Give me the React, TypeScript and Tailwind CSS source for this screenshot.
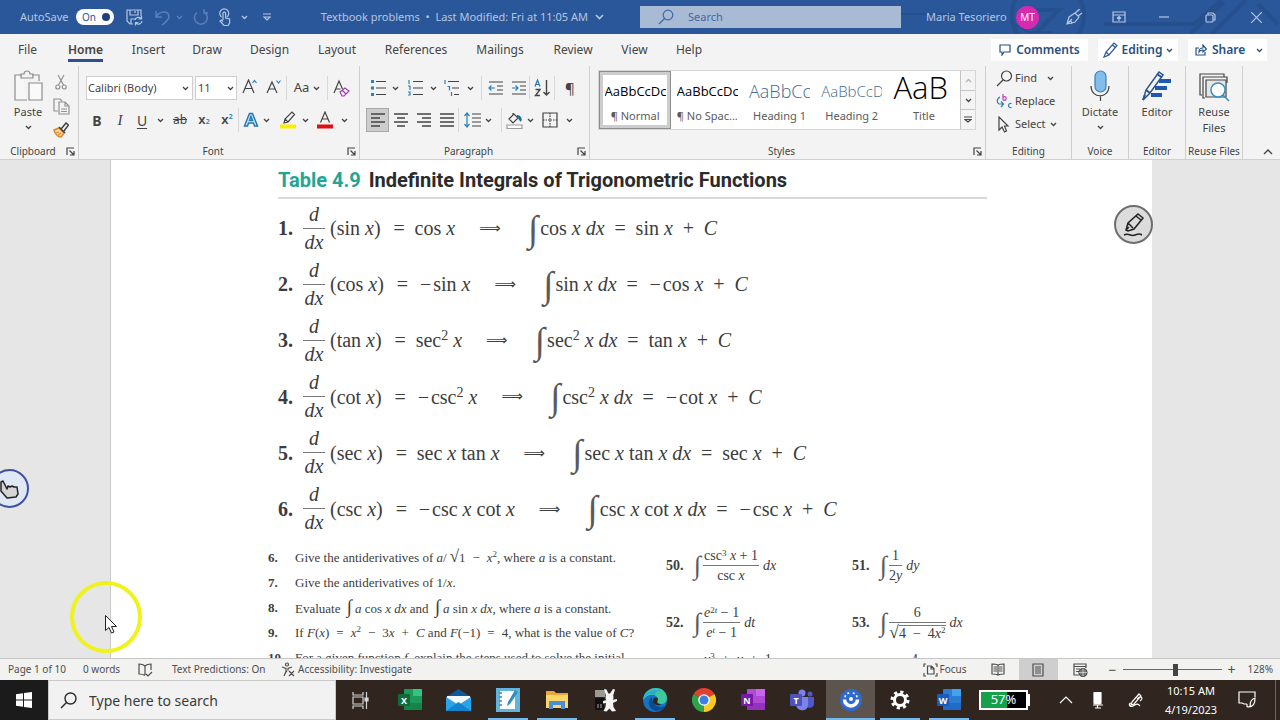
import type { ReactNode } from 'react';
import clsx from 'clsx';

interface BoxProps {
  children?: ReactNode;
  className?: string;
}

const tabs = [
  { name: 'File', width: 'w-[49px]' },
  { name: 'Home', width: 'w-[67px]' },
  { name: 'Insert', width: 'w-[59px]' },
  { name: 'Draw', width: 'w-[58px]' },
  { name: 'Design', width: 'w-[67px]' },
  { name: 'Layout', width: 'w-[68px]' },
  { name: 'References', width: 'w-[90px]' },
  { name: 'Mailings', width: 'w-[78px]' },
  { name: 'Review', width: 'w-[68px]' },
  { name: 'View', width: 'w-[55px]' },
  { name: 'Help', width: 'w-[54px]' },
];

const styleCards = [
  { sample: 'AaBbCcDc', label: '¶ Normal', look: 'text-[13px] leading-10 text-black' },
  { sample: 'AaBbCcDc', label: '¶ No Spac...', look: 'text-[13px] leading-10 text-black' },
  { sample: 'AaBbCc', label: 'Heading 1', look: 'text-[18px] leading-10 font-light text-[#44698f]' },
  { sample: 'AaBbCcD', label: 'Heading 2', look: 'text-[15px] leading-10 font-light text-[#44698f]' },
  { sample: 'AaB', label: 'Title', look: 'text-[31px] leading-8 font-light text-black' },
];

/* ---------- small building blocks ---------- */

function Svg({ w, h, children, className }: { w: number; h: number; children: ReactNode; className?: string }) {
  return (
    <svg
      width={w}
      height={h}
      viewBox={`0 0 ${w} ${h}`}
      fill="none"
      stroke="currentColor"
      strokeWidth="1.2"
      className={clsx('shrink-0', className)}
      aria-hidden="true"
    >
      {children}
    </svg>
  );
}

function Chevron({ className }: { className?: string }) {
  return (
    <Svg w={7} h={5} className={className}>
      <path d="M1 1l2.5 2.5L6 1" strokeWidth="1.3" />
    </Svg>
  );
}

function Tool({ label, className, children }: BoxProps & { label: string }) {
  return (
    <button aria-label={label} className={clsx('flex h-6 shrink-0 items-center justify-center', className)}>
      {children}
    </button>
  );
}

function Drop({ label, className }: { label: string; className: string }) {
  return (
    <Tool label={label} className={className}>
      <Chevron />
    </Tool>
  );
}

function Rule() {
  return <div className="h-6 w-px shrink-0 bg-[#d8d8d8]" />;
}

function Group({ label, launcher, className, children }: BoxProps & { label: string; launcher?: boolean }) {
  return (
    <section className={clsx('flex shrink-0 flex-col border-r border-[#cfcfcf]', className)}>
      <div className="h-[78px]">{children}</div>
      <div className="flex h-4 items-center">
        <span className="flex-1 text-center text-[10px] whitespace-nowrap">{label}</span>
        {launcher && (
          <button aria-label={`${label} settings`} className="mr-[3px]">
            <Svg w={9} h={9}>
              <path d="M1 8V1h7M3.5 3.5l4 4M8 4v4H4" />
            </Svg>
          </button>
        )}
      </div>
    </section>
  );
}

/* ---------- title bar ---------- */

function TitleBar() {
  return (
    <header className="relative flex h-[34px] shrink-0 items-center bg-[#2a579a] text-[12px] text-[#b5c6e0]">
      <svg
        className="pointer-events-none absolute top-0 right-0"
        width="420"
        height="34"
        viewBox="0 0 420 34"
        fill="none"
        stroke="#264f8e"
        strokeWidth="4"
        aria-hidden="true"
      >
        <path d="M40 14h70M150 22l18 10h24" strokeWidth="2" />
        <circle cx="188" cy="15" r="36" />
        <path d="M165 10h34l-22 22M244 24h90l28-24M330 34l34-32M352 34l34-34M398 4l20 20" />
      </svg>
      <label className="ml-5 flex items-center">
        <span className="w-14 text-[11px]">AutoSave</span>
        <input type="checkbox" defaultChecked className="peer sr-only" />
        <span className="flex h-4 w-[38px] items-center justify-between rounded-full bg-white pr-1 pl-[6px] text-[10px] text-[#2a579a]">
          On
          <i className="h-2 w-2 rounded-full bg-[#1f4079]" />
        </span>
      </label>
      <button aria-label="Save" className="ml-3">
        <Svg w={17} h={17}>
          <path d="M7 15H4l-3-3V1h14v6M4 1v5h8V1M5 15v-5h4M9 2v2" />
          <path d="M9 11a3.5 3.5 0 0 1 6-1.5M15.500 7v3h-3M16 12a3.500 3.500 0 0 1-6 2M9.500 16.500v-3h3" />
        </Svg>
      </button>
      <button aria-label="Undo" className="ml-3 flex items-center gap-[5px] text-[#5b80b8]">
        <Svg w={16} h={17}>
          <path d="M1 2v6h6M1.500 7.500C4 2 13 1 14 7c.5 3-3 6-7 9" strokeWidth="1.5" />
        </Svg>
        <Chevron />
      </button>
      <button aria-label="Repeat" className="ml-[10px] text-[#5b80b8]">
        <Svg w={16} h={17}>
          <path d="M11 3A6.500 6.500 0 1 1 4 3.500M11 0v4h4" strokeWidth="1.5" />
        </Svg>
      </button>
      <button aria-label="Touch mode" className="ml-[9px] flex items-center gap-[9px]">
        <Svg w={14} h={18}>
          <path d="M3.500 9a4.500 4.500 0 1 1 5.500 0M5 12V5.500a1.300 1.300 0 0 1 2.600 0V10l4 1v4l-1.500 2.500H6L2 13l1.500-1 1.500 1.500" />
        </Svg>
        <Chevron />
      </button>
      <button aria-label="Customize Quick Access Toolbar" className="ml-[14px]">
        <Svg w={10} h={8}>
          <path d="M1 1h8M2 4l3 3 3-3z" />
        </Svg>
      </button>
      <div className="min-w-0 flex-1" />
      <button className="flex items-center text-[11px] whitespace-nowrap">
        Textbook problems&nbsp; •&nbsp; Last Modified: Fri at 11:05 AM
        <Svg w={9} h={6} className="ml-[7px]">
          <path d="M1 1l3.500 3.500L8 1" strokeWidth="1.6" />
        </Svg>
      </button>
      <label className="relative ml-9 flex h-[22px] w-[261px] items-center bg-[#a9bad5] pl-[18px] text-[#3f68a8]">
        <Svg w={16} h={16}>
          <circle cx="10" cy="6" r="4.800" />
          <path d="M6.500 9.500L1 15" />
        </Svg>
        <input
          placeholder="Search"
          aria-label="Search"
          className="ml-[14px] w-40 bg-transparent text-[11px] outline-none placeholder:text-[#3f68a8]"
        />
      </label>
      <button className="relative ml-[25px] flex items-center text-[11px] whitespace-nowrap">
        <span className="w-[90px] text-left">Maria Tesoriero</span>
        <span className="flex h-[23px] w-[23px] items-center justify-center rounded-full bg-[#d829b0] text-[10px] text-white">MT</span>
      </button>
      <div className="relative ml-[13px] flex w-[228px] items-center justify-around">
        <button aria-label="Ink" className="w-[44px]">
          <Svg w={18} h={17} className="mx-auto">
            <path d="M2 15l2-7 6-4 4 4-4 5zM2 15l5-5M10 4l4-3M13 7l4-3M12 2l3-2M6 12l1 3" />
          </Svg>
        </button>
        <button aria-label="Ribbon display options" className="w-[44px]">
          <Svg w={14} h={12} className="mx-auto">
            <path d="M1 1h12v10H1zM1 4h12M7 10V6M5 7.500l2-2 2 2" />
          </Svg>
        </button>
        <button aria-label="Minimize" className="w-[46px]">
          <Svg w={10} h={2} className="mx-auto">
            <path d="M0 1h10" />
          </Svg>
        </button>
        <button aria-label="Restore" className="w-[46px]">
          <Svg w={11} h={11} className="mx-auto">
            <rect x="1" y="3" width="7" height="7" rx="1" />
            <path d="M3 3V1h5l2 2v5H8" />
          </Svg>
        </button>
        <button aria-label="Close" className="w-[46px]">
          <Svg w={11} h={11} className="mx-auto">
            <path d="M0 0l11 11M11 0L0 11" />
          </Svg>
        </button>
      </div>
    </header>
  );
}

function TabRow() {
  return (
    <nav className="flex h-8 items-center pl-[3px] text-[12px]">
      {tabs.map(tab => (
        <button key={tab.name} className={clsx('flex h-8 justify-center', tab.width)}>
          <span
            className={clsx(
              'mt-1 h-6 border-b-3 leading-6',
              tab.name === 'Home' ? 'border-[#2b4f92] font-semibold' : 'border-transparent'
            )}
          >
            {tab.name}
          </span>
        </button>
      ))}
      <div className="flex-1" />
      <div className="mr-[13px] flex h-[22px] gap-[10px] text-[12px] font-semibold text-[#25507f]">
        <button className="flex w-[97px] items-center justify-center gap-[5px] bg-white">
          <Svg w={12} h={12}>
            <path d="M1 1h10v7H5l-2 3V8H1z" />
          </Svg>
          Comments
        </button>
        <button className="flex w-[80px] items-center justify-center gap-[3px] bg-white">
          <Svg w={15} h={16} className="text-[#2a579a]">
            <path d="M1 15l2-5L11 1l3 2.500L6 13zM9.500 3l3 2.500M3 10l3 3" />
          </Svg>
          Editing
          <Chevron />
        </button>
        <button className="flex w-[79px] items-center bg-white pl-[7px]">
          <Svg w={12} h={12}>
            <path d="M4 4H1v7h9V8M4 8c0-3 1-4 4-4V1l3.500 4L8 8V6C6 6 5 6.500 4 8z" />
          </Svg>
          <span className="ml-[5px] flex-1 text-left">Share</span>
          <Chevron className="mr-1" />
        </button>
      </div>
    </nav>
  );
}

/* ---------- ribbon groups ---------- */

function ClipboardGroup() {
  return (
    <Group label="Clipboard" launcher className="w-[79px]">
      <div className="flex pt-[4px]">
        <button className="ml-[10px] flex w-9 flex-col items-center text-[11px]">
          <Svg w={29} h={32} className="text-[#8d8d8d]">
            <path d="M13 30H1V5h7M18 5h7v6" fill="#f7f7f7" />
            <path d="M7 8V4h3c0-4 6-4 6 0h3v4z" />
            <path d="M15 13h13v17H15z" fill="#fafafa" />
          </Svg>
          <span className="leading-5">Paste</span>
          <Chevron className="mt-[3px]" />
        </button>
        <div className="ml-[5px] flex w-5 flex-col">
          <Tool label="Cut">
            <Svg w={12} h={16} className="text-[#929292]">
              <path d="M3 1l5.500 10M9 1L3.500 11" />
              <circle cx="2.800" cy="13" r="2" />
              <circle cx="9.200" cy="13" r="2" />
            </Svg>
          </Tool>
          <Tool label="Copy">
            <Svg w={17} h={17} className="text-[#929292]">
              <path d="M5 13H1V1h6l2 2M6 4h6l4 4v8H6zM12 4v4h4M8 11h6M8 13.500h6" />
            </Svg>
          </Tool>
          <Tool label="Format Painter">
            <Svg w={16} h={16}>
              <path d="M1 8l5-2 5 5-3 4c-3 0-6-3-7-7z" fill="#fbd9b0" stroke="#e0851f" strokeWidth="1.500" />
              <path d="M3 11l3-1M5 13l3-2" stroke="#e0851f" />
              <path d="M6 5l6 6M8.500 6.500L13 1l2.500 2-4.500 6" stroke="#444" strokeWidth="1.500" />
            </Svg>
          </Tool>
        </div>
      </div>
    </Group>
  );
}

function FontGroup() {
  return (
    <Group label="Font" launcher className="w-[281px]">
      <div className="flex h-11 items-center pl-[7px]">
        <label className="relative mr-[2px] flex h-6 w-[107px] items-center border border-[#cfcfcf] bg-white pl-px">
          <select aria-label="Font name" className="w-full appearance-none text-[11px] outline-none">
            <option>Calibri (Body)</option>
          </select>
          <Chevron className="absolute right-[3px]" />
        </label>
        <label className="relative flex h-6 w-[42px] items-center border border-[#cfcfcf] bg-white pl-[2px]">
          <select aria-label="Font size" className="w-full appearance-none text-[11px] outline-none">
            <option>11</option>
          </select>
          <Chevron className="absolute right-[2px]" />
        </label>
        <Tool label="Grow font" className="w-[25px]">
          <Svg w={16} h={18}>
            <path d="M1 14L6.500 1 12 14M3 9.500h7" />
            <path d="M10.500 4l2-2.500 2 2.500" stroke="#2a7fc0" />
          </Svg>
        </Tool>
        <Tool label="Shrink font" className="w-[24px]">
          <Svg w={16} h={18}>
            <path d="M1 14L6 3l5 11M3 10h6.500" />
            <path d="M10.500 1.500l2 2.500 2-2.500" stroke="#2a7fc0" />
          </Svg>
        </Tool>
        <Rule />
        <Tool label="Change case" className="w-[40px] gap-1 text-[13px]">
          Aa
          <Chevron />
        </Tool>
        <Rule />
        <Tool label="Clear formatting" className="w-[27px]">
          <Svg w={17} h={18}>
            <path d="M1 14L6 2l3.500 8M3 10h4.500" />
            <path d="M7 13l5-4 4 3-5 5H9zM9 11l4 4" stroke="#a33bb5" />
          </Svg>
        </Tool>
      </div>
      <div className="flex h-5 items-center pl-[7px] text-[14px]">
        <Tool label="Bold" className="w-[22px] font-bold">B</Tool>
        <Tool label="Italic" className="w-6 font-['Liberation_Serif'] text-[15px] italic">I</Tool>
        <Tool label="Underline" className="w-5 underline underline-offset-2">U</Tool>
        <Drop label="Underline styles" className="w-4" />
        <Tool label="Strikethrough" className="w-6 text-[12px] line-through">ab</Tool>
        <Tool label="Subscript" className="w-6 text-[13px] font-semibold">
          x<sub className="text-[7px] text-[#2a7fc0]">2</sub>
        </Tool>
        <Tool label="Superscript" className="w-[22px] text-[13px] font-semibold">
          x<sup className="text-[7px] text-[#2a7fc0]">2</sup>
        </Tool>
        <Rule />
        <Tool label="Text effects" className="w-6">
          <Svg w={16} h={16}>
            <path
              d="M1.500 14L6.500 1.500h3l5 12.500h-3l-1-3h-5l-1 3zM6.500 8.500h3L8 4.500z"
              stroke="#2378b5"
              strokeWidth="1.500"
              fill="#d6eaf8"
            />
          </Svg>
        </Tool>
        <Drop label="Effect options" className="w-[7px]" />
        <Tool label="Highlight" className="ml-[5px] w-[26px]">
          <Svg w={16} h={18}>
            <path d="M0 15.500h16" stroke="#f7f000" strokeWidth="4" />
            <path d="M4 12l1-4 7-7 2.500 2.500L8 11zM5 8l3 3" />
          </Svg>
        </Tool>
        <Drop label="Highlight colours" className="w-[8px]" />
        <Tool label="Font colour" className="w-8">
          <Svg w={16} h={18}>
            <path d="M0 15.500h16" stroke="#e01010" strokeWidth="4" />
            <path d="M3.500 11.500L8 1l4.500 10.500M5 8h6" />
          </Svg>
        </Tool>
        <Drop label="Font colours" className="w-[7px]" />
      </div>
    </Group>
  );
}

function Lines({ d, w = 16 }: { d: string; w?: number }) {
  return (
    <Svg w={w} h={16}>
      <path d={d} strokeWidth="1.300" />
    </Svg>
  );
}

function ParagraphGroup() {
  return (
    <Group label="Paragraph" launcher className="w-[230px]">
      <div className="flex h-11 items-center pl-[6px]">
        <Tool label="Bullets" className="w-6">
          <Svg w={17} h={16}>
            <path d="M1 1.500h3M1 8h3M1 14.500h3" stroke="#2a7fc0" strokeWidth="3" />
            <path d="M6 1.500h10M6 8h10M6 14.500h10" />
          </Svg>
        </Tool>
        <Drop label="Bullet library" className="w-[11px]" />
        <Tool label="Numbering" className="w-7">
          <Svg w={17} h={16}>
            <path d="M2 0v4M1 6h2v4M1 12h2v3H1" stroke="#2a7fc0" />
            <path d="M6 1.500h10M6 8h10M6 14.500h10" />
          </Svg>
        </Tool>
        <Drop label="Numbering library" className="w-[8px]" />
        <Tool label="Multilevel list" className="w-[30px]">
          <Svg w={16} h={16}>
            <path d="M1 0v4M3.500 6.500h2v4M7.500 12v4" stroke="#2a7fc0" />
            <path d="M4 1.500h11M8 8h7M10 14.500h5" />
          </Svg>
        </Tool>
        <Drop label="List library" className="mr-2 w-[6px]" />
        <Rule />
        <Tool label="Decrease indent" className="w-[27px]">
          <Svg w={16} h={14}>
            <path d="M1 1h14M9 5h6M9 9h6M1 13h14" />
            <path d="M7 7H1M3.500 4.500L1 7l2.500 2.500" stroke="#2a7fc0" />
          </Svg>
        </Tool>
        <Tool label="Increase indent" className="w-[20px]">
          <Svg w={16} h={14}>
            <path d="M1 1h14M9 5h6M9 9h6M1 13h14" />
            <path d="M1 7h6M4.500 4.500L7 7 4.500 9.500" stroke="#2a7fc0" />
          </Svg>
        </Tool>
        <Rule />
        <Tool label="Sort" className="w-6">
          <Svg w={17} h={18}>
            <path d="M1 7.500L3.500 1 6 7.500M2 5.500h3" stroke="#2378b5" />
            <path d="M1.500 10.500H6L1.500 16.500H6M12.500 1v15M9.500 13l3 3 3-3" strokeWidth="1.400" />
          </Svg>
        </Tool>
        <Rule />
        <Tool label="Show marks" className="w-[30px] text-[15px]">¶</Tool>
      </div>
      <div className="flex h-5 items-center pl-[6px]">
        <Tool label="Align left" className="w-[23px] border border-[#a8a8a8] bg-[#cdcdcd]">
          <Lines d="M1 2h14M1 6h9M1 10h14M1 14h9" />
        </Tool>
        <Tool label="Center" className="w-[23px]">
          <Lines d="M1 2h14M4 6h8M1 10h14M4 14h8" />
        </Tool>
        <Tool label="Align right" className="w-[23px]">
          <Lines d="M1 2h14M6 6h9M1 10h14M6 14h9" />
        </Tool>
        <Tool label="Justify" className="w-[23px]">
          <Lines d="M1 2h14M1 6h14M1 10h14M1 14h14" />
        </Tool>
        <Rule />
        <Tool label="Line spacing" className="w-[26px]">
          <Svg w={17} h={16}>
            <path d="M3 1v14M.5 4L3 1l2.500 3M.5 12L3 15l2.500-3" stroke="#2a7fc0" />
            <path d="M8 2h9M8 6h9M8 10h9M8 14h9" />
          </Svg>
        </Tool>
        <Drop label="Spacing options" className="mr-[9px] w-[7px]" />
        <Rule />
        <Tool label="Shading" className="w-6">
          <Svg w={17} h={17}>
            <path d="M3 7l5-5 4 4-5 5zM7 4V1" />
            <path d="M12 5l3 4M14 9c2-2 0-5-3-5" stroke="#1f6e96" strokeWidth="1.800" />
            <path d="M1 13h15v3.500H1z" stroke="#9b9b9b" fill="#fff" />
          </Svg>
        </Tool>
        <Drop label="Shading colours" className="w-[8px]" />
        <Tool label="Borders" className="w-8">
          <Svg w={16} h={16}>
            <path d="M1 1h14v14H1z" />
            <path d="M8 1v14M1 8h14" strokeDasharray="1.500 1" />
          </Svg>
        </Tool>
        <Drop label="Border options" className="w-[7px]" />
      </div>
    </Group>
  );
}

function StylesGroup() {
  return (
    <Group label="Styles" launcher className="min-w-0 flex-1">
      <div className="pt-1 pr-[9px] pl-2">
        <div className="flex h-[60px] border border-[#d6d6d6] bg-white">
          {styleCards.map((card, i) => (
            <button
              key={card.label}
              className={clsx(
                'flex min-w-0 flex-1 flex-col items-center overflow-hidden',
                i === 0 && 'outline outline-1 -outline-offset-1 outline-[#8c8c8c] ring-4 ring-[#cdcdcd] ring-inset'
              )}
            >
              <span
                className={clsx(
                  "block h-[34px] w-[61px] overflow-hidden text-left font-['Open_Sans'] whitespace-nowrap",
                  card.look
                )}
              >
                {card.sample}
              </span>
              <span className="text-[11px] leading-[22px] whitespace-nowrap text-[#5a5a5a]">{card.label}</span>
            </button>
          ))}
          <div className="flex w-[15px] flex-col divide-y divide-[#c4c4c4] border-l border-[#c4c4c4] bg-[#f4f4f4]">
            <button aria-label="Previous styles" className="flex flex-1 items-center justify-center text-[#b5b5b5]">
              <Chevron className="rotate-180" />
            </button>
            <button aria-label="Next styles" className="flex flex-1 items-center justify-center">
              <Chevron />
            </button>
            <button aria-label="More styles" className="flex flex-1 items-center justify-center">
              <Svg w={8} h={7}>
                <path d="M0 1h8M1 3.500l3 2.500 3-2.500z" />
              </Svg>
            </button>
          </div>
        </div>
      </div>
    </Group>
  );
}

function EditingGroup() {
  return (
    <Group label="Editing" className="w-[86px]">
      <div className="flex flex-col pt-px pl-[10px] text-[11px]">
        <button className="flex h-[23px] items-center">
          <Svg w={17} h={17} className="mr-[2px]">
            <circle cx="10.500" cy="6" r="5" />
            <path d="M7 10l-6 6" />
          </Svg>
          Find
          <Chevron className="ml-[10px]" />
        </button>
        <button className="flex h-[23px] items-center">
          <Svg w={17} h={17} className="mr-[2px]">
            <path d="M7 1v6M7 4.500c2-2 4 0 3 2-1 1-2 1-3 0" stroke="#b146c2" />
            <path d="M15.500 10.500c-4-1-4 5 0 4" stroke="#2a7fc0" />
            <path d="M4 4C0 6 1 10 3 11h4M5 8.500L7.500 11 5 14" stroke="#2a7fc0" />
          </Svg>
          Replace
        </button>
        <button className="flex h-[23px] items-center">
          <Svg w={17} h={17} className="mr-[2px]">
            <path d="M3 1v13l3-3 2.500 5 2-1L8.500 10H12z" />
          </Svg>
          Select
          <Chevron className="ml-1" />
        </button>
      </div>
    </Group>
  );
}

function Ribbon() {
  return (
    <div className="flex h-[94px] items-stretch border-b border-[#d0d0d0]">
      <ClipboardGroup />
      <FontGroup />
      <ParagraphGroup />
      <StylesGroup />
      <EditingGroup />
      <Group label="Voice" className="w-[57px]">
        <button className="flex w-full flex-col items-center pt-1 text-[11px]">
          <Svg w={20} h={32}>
            <rect x="5" y="1" width="11" height="21" rx="5.500" fill="#83bdec" stroke="#3f7fb8" />
            <path d="M1 16c0 13 18 13 18 0M10.500 26v5" />
          </Svg>
          <span className="leading-5">Dictate</span>
          <Chevron className="mt-[3px]" />
        </button>
      </Group>
      <Group label="Editor" className="w-[57px]">
        <button className="flex w-full flex-col items-center pt-1 text-[11px]">
          <Svg w={32} h={32}>
            <path d="M18 11h12M14 18h12M10 25h11" stroke="#1e5bb0" strokeWidth="4" />
            <path d="M2 30l3-10L18 2l4 3L9 23z" fill="#f3f3f3" stroke="#2a5591" strokeWidth="1.500" />
            <path d="M16 4l5 3.500M5 20l4 3M2 30l2-5" stroke="#2a5591" strokeWidth="2" />
          </Svg>
          <span className="leading-5">Editor</span>
        </button>
      </Group>
      <Group label="Reuse Files" className="w-[57px]">
        <button className="flex w-full flex-col items-center pt-1 text-[11px]">
          <Svg w={32} h={32}>
            <path d="M4 25H2V4h24v3M7 28H5V7h24v6" />
            <path d="M8 10h20v17H8z" fill="#e6e6e6" />
            <circle cx="20" cy="20" r="7" stroke="#3a8cc4" fill="#fff" strokeWidth="1.500" />
            <path d="M25 25l6 6" stroke="#3a8cc4" strokeWidth="1.500" />
          </Svg>
          <span className="w-10 pt-[2px] leading-4">Reuse Files</span>
        </button>
      </Group>
      <button aria-label="Collapse the ribbon" className="flex w-[37px] items-end justify-center pb-[4px] pl-3">
        <Svg w={10} h={6}>
          <path d="M1 5l4-4 4 4" strokeWidth="1.400" />
        </Svg>
      </button>
    </div>
  );
}

/* ---------- document ---------- */

function Op({ children }: BoxProps) {
  return <span className="w-[31px] text-center">{children}</span>;
}

function Term({ children, className }: BoxProps) {
  return <span className={clsx('whitespace-pre', className)}>{children}</span>;
}

const X = () => <i>x</i>;
const Sq = () => <sup className="text-[14px] leading-none">2</sup>;
const Neg = () => <span className="px-[2px]">−</span>;

const rules = [
  { fn: 'sin', left: <>cos <X /></>, inner: <>cos <X /> <i>dx</i></>, right: <>sin <X /></> },
  { fn: 'cos', left: <><Neg />sin <X /></>, inner: <>sin <X /> <i>dx</i></>, right: <><Neg />cos <X /></> },
  { fn: 'tan', left: <>sec<Sq /> <X /></>, inner: <>sec<Sq /> <X /> <i>dx</i></>, right: <>tan <X /></> },
  { fn: 'cot', left: <><Neg />csc<Sq /> <X /></>, inner: <>csc<Sq /> <X /> <i>dx</i></>, right: <><Neg />cot <X /></> },
  { fn: 'sec', left: <>sec <X /> tan <X /></>, inner: <>sec <X /> tan <X /> <i>dx</i></>, right: <>sec <X /></> },
  { fn: 'csc', left: <><Neg />csc <X /> cot <X /></>, inner: <>csc <X /> cot <X /> <i>dx</i></>, right: <><Neg />csc <X /></> },
];

function Fraction({ top, bottom, className }: { top: ReactNode; bottom: ReactNode; className?: string }) {
  return (
    <span className={clsx('flex flex-col items-center whitespace-pre', className)}>
      <span className="w-full border-b border-[#777] px-px text-center">{top}</span>
      <span>{bottom}</span>
    </span>
  );
}

interface ExerciseProps {
  n: number;
  top: ReactNode;
  bottom: ReactNode;
  d: string;
  height?: string;
}

function Exercise({ n, top, bottom, d, height = 'h-[57px]' }: ExerciseProps) {
  return (
    <li className={clsx('flex items-center', height)}>
      <b className="w-7">{n}.</b>
      <span className="w-[9px] text-[26px] leading-none text-[#5a5a5a]">∫</span>
      <Fraction top={top} bottom={bottom} className="leading-[19px]" />
      <i className="ml-1">{d}</i>
    </li>
  );
}

const Small = ({ children }: BoxProps) => <sup className="text-[9px] leading-none">{children}</sup>;
const Sign = ({ children }: BoxProps) => <span className="mx-[7px]">{children}</span>;
const Integral = () => <span className="mx-[3px] text-[19px] leading-none">∫</span>;

const questions = [
  {
    n: 6,
    text: (
      <>
        Give the antiderivatives of <i>a</i>/<span className="ml-[3px] text-[17px] leading-none">√</span>1<Sign>−</Sign>
        <i>x</i><Small>2</Small>, where <i>a</i> is a constant.
      </>
    ),
  },
  { n: 7, text: <>Give the antiderivatives of 1/<i>x</i>.</> },
  {
    n: 8,
    text: (
      <>
        Evaluate <Integral /><i>a</i> cos <i>x dx</i> and <Integral /><i>a</i> sin <i>x dx</i>, where <i>a</i> is a constant.
      </>
    ),
  },
  {
    n: 9,
    text: (
      <>
        If <i>F</i>(<i>x</i>)<Sign>=</Sign><i>x</i><Small>2</Small><Sign>−</Sign>3<i>x</i><Sign>+</Sign><i>C</i> and{' '}
        <i>F</i>(−1)<Sign>=</Sign>4, what is the value of <i>C</i>?
      </>
    ),
  },
  { n: 10, text: <>For a given function <i>f</i>, explain the steps used to solve the initial</> },
];

function DocumentPage() {
  return (
    <article className="h-full min-w-0 flex-1 overflow-hidden border-l border-[#c8c8c8] bg-white font-['Liberation_Serif',serif] text-[#3d3d3d]">
      <div className="mr-[165px] ml-[167px] border-b-2 border-[#d9d9d9] pt-2 pb-[5px] font-['Roboto',sans-serif] text-[20px] leading-6 font-bold whitespace-nowrap">
        <span className="mr-2 text-[#22a594]">Table 4.9</span>
        <span className="text-[#2b2b2b]">Indefinite Integrals of Trigonometric Functions</span>
      </div>
      <ol className="flex h-[338px] flex-col pt-px pl-[167px] text-[20px]">
        {rules.map((rule, i) => (
          <li key={rule.fn} className="flex flex-1 items-center">
            <b className="w-[25px]">{i + 1}.</b>
            <Fraction top={<i>d</i>} bottom={<i>dx</i>} className="mr-[5px] w-[22px] leading-[27px]" />
            <Term className="pr-[3px]">({rule.fn} <X />)</Term>
            <Op>=</Op>
            <Term>{rule.left}</Term>
            <span className="mr-7 ml-6 w-[21px] font-['DejaVu_Sans',sans-serif] text-[15px]">⟹</span>
            <span className="w-3 text-[37px] leading-none text-[#5a5a5a]">∫</span>
            <Term>{rule.inner}</Term>
            <Op>=</Op>
            <Term>{rule.right}</Term>
            <Op>+</Op>
            <i>C</i>
          </li>
        ))}
      </ol>
      <div className="flex pl-[157px]">
        <ol className="w-[398px] pt-2 text-[13px]">
          {questions.map(q => (
            <li key={q.n} className="flex h-[25px] items-center whitespace-nowrap">
              <b className="w-[27px] shrink-0">{q.n}.</b>
              <span>{q.text}</span>
            </li>
          ))}
        </ol>
        <ol className="w-[186px] text-[14px]">
          <Exercise n={50} top={<>csc<Small>3</Small> <i>x</i> + 1</>} bottom={<>csc <i>x</i></>} d="dx" />
          <Exercise n={52} top={<><i>e</i><Small>2<i>t</i></Small> − 1</>} bottom={<><i>e</i><Small><i>t</i></Small> − 1</>} d="dt" />
          <Exercise n={54} top={<><i>y</i><Small>3</Small>  +  <i>y</i>  +  1</>} bottom={<i>y</i>} d="dy" height="h-9" />
        </ol>
        <ol className="w-[186px] text-[14px]">
          <Exercise n={51} top="1" bottom={<>2<i>y</i></>} d="dy" />
          <Exercise
            n={53}
            top="6"
            bottom={
              <>
                <span className="text-[18px] leading-none">√</span>
                <span className="border-t border-[#777]">4<Sign>−</Sign>4<i>x</i><Small>2</Small></span>
              </>
            }
            d="dx"
          />
          <Exercise n={55} top="      4      " bottom={<>1 + <i>x</i></>} d="dx" height="h-9" />
        </ol>
      </div>
    </article>
  );
}

function Workspace() {
  return (
    <main className="relative min-h-0 flex-1 overflow-hidden bg-[#e6e6e6]">
      <div className="flex h-full pr-[128px] pl-[110px]">
        <DocumentPage />
      </div>

      <button
        aria-label="Pen tools"
        className="absolute top-[45px] right-[127px] flex h-[39px] w-[39px] items-center justify-center rounded-full border-2 border-[#6e6e6e] bg-[#dcdcdc] text-[#222]"
      >
        <Svg w={24} h={26}>
          <path d="M4 18l2-7L16 2l5 4-9 11-6 2zM14 4l5 4M6 11l5 5M4 18l3-3" strokeWidth="1.500" />
          <path d="M2 23c5-3 6 2 11 0s5-1 7 0" strokeWidth="1.500" />
        </Svg>
      </button>

      <div className="absolute top-[309px] -left-[10px] flex h-[39px] w-[39px] items-center justify-center rounded-full border-2 border-[#3f51a0] bg-[#dfe8f4] text-[#222]">
        <Svg w={22} h={22}>
          <path
            d="M2 4l2-1 4 8 1-3 2 1 2-1 2 1 3 0 1 7-2 3-9 1-6-7z"
            fill="#d5d5d5"
            strokeWidth="1.500"
            strokeLinejoin="round"
          />
        </Svg>
      </div>

      <div className="absolute top-[421px] left-[70px] h-[72px] w-[72px] rounded-full border-4 border-[#f0f21c]" />
      <svg className="absolute top-[455px] left-[105px]" width="12" height="19" viewBox="0 0 12 19" aria-hidden="true">
        <path d="M.5.500v15l3.500-3 2.500 5.500 2.500-1-2.500-5.500h5z" fill="#fff" stroke="#222" />
      </svg>
    </main>
  );
}

/* ---------- status bar ---------- */

function StatusBar() {
  return (
    <footer className="flex h-[22px] shrink-0 items-center border-t border-[#c6c6c6] bg-[#f2f2f1] pl-2 text-[10px] whitespace-nowrap text-[#4e4e4e]">
      <span className="w-[75px]">Page 1 of 10</span>
      <span className="w-[55px]">0 words</span>
      <Svg w={15} h={14}>
        <path d="M7 12V3C5 1 3 1 1 1v10c2 0 4 0 6 1.500M7 3c2-2 4-2 6-2v6M8 11l2 2 4-4" />
      </Svg>
      <span className="ml-[19px] w-[109px]">Text Predictions: On</span>
      <button className="flex items-center gap-[2px]">
        <Svg w={15} h={15}>
          <circle cx="6" cy="2.500" r="1.500" />
          <path d="M1 5l4 1.500v3L3 14M11 5L7 6.500v2M8 9l5 5M13 9l-5 5M5 10l1-1" />
        </Svg>
        Accessibility: Investigate
      </button>
      <div className="flex-1" />
      <button className="mr-1 flex items-center gap-[2px]">
        <Svg w={15} h={14}>
          <path d="M3 1H1v3M12 1h2v3M3 13H1v-3M12 13h2v-3M4.500 3h4l2.500 2.500V11H4.500zM8 3v3h3" />
        </Svg>
        Focus
      </button>
      <button aria-label="Read mode" className="ml-[6px] flex h-full w-[42px] items-center justify-center">
        <Svg w={14} h={13}>
          <path d="M7 12V2C5 1 3 1 1 1v10c2 0 4 0 6 1 2-1 4-1 6-1V1c-2 0-4 0-6 1M2.500 4H6M2.500 6H6M2.500 8H6M8 4h3.500M8 6h3.500M8 8h3.500" />
        </Svg>
      </button>
      <button aria-label="Print layout" className="mr-[2px] flex h-full w-[39px] items-center justify-center bg-[#cecece]">
        <Svg w={12} h={14}>
          <path d="M1 1h10v12H1zM3 4h6M3 6h6M3 8h6M3 10h6" />
        </Svg>
      </button>
      <button aria-label="Web layout" className="flex h-full w-[41px] items-center justify-center">
        <Svg w={15} h={14}>
          <path d="M6 12H1V1h12v4M1 3.500h12M3 6h4M3 8.500h3" />
          <circle cx="10" cy="9.500" r="4" fill="#777" />
          <path d="M6 9.500h8M10 5.500v8" stroke="#eee" strokeWidth=".6" />
        </Svg>
      </button>
      <button aria-label="Zoom out" className="ml-1 w-4 text-[14px]">−</button>
      <input
        type="range"
        min="0"
        max="100"
        defaultValue="54"
        aria-label="Zoom"
        className="mx-[2px] h-3 w-[99px] appearance-none bg-[linear-gradient(#666,#666)] bg-size-[100%_1px] bg-center bg-no-repeat [&::-webkit-slider-thumb]:h-3 [&::-webkit-slider-thumb]:w-[5px] [&::-webkit-slider-thumb]:appearance-none [&::-webkit-slider-thumb]:bg-[#444]"
      />
      <button aria-label="Zoom in" className="w-4 text-[14px]">+</button>
      <span className="mr-[7px] ml-2">128%</span>
    </footer>
  );
}

/* ---------- taskbar ---------- */

function AppButton({ label, open, active, children }: BoxProps & { label: string; open?: boolean; active?: boolean }) {
  return (
    <button aria-label={label} className={clsx('flex h-10 w-[49px] flex-col items-center', active && 'bg-[#5d544e]')}>
      <span className="flex h-[38px] items-center pt-[2px]">{children}</span>
      {open && <span className={clsx('h-[2px] bg-[#76b9ed]', active ? 'w-full' : 'w-10')} />}
    </button>
  );
}

function Tile({ letter, dark, mid, light }: { letter: string; dark: string; mid: string; light: string }) {
  return (
    <svg width="24" height="22" viewBox="0 0 24 22" aria-hidden="true">
      <rect x="6" width="18" height="21" rx="1" fill={mid} />
      <path d="M15 0h8a1 1 0 0 1 1 1v6h-9z" fill={light} />
      <path d="M6 14h18v6a1 1 0 0 1-1 1H6z" fill={dark} opacity=".5" />
      <rect y="5" width="12" height="12" rx="1" fill={dark} />
      <text x="6" y="14.500" textAnchor="middle" fontSize="9" fontWeight="700" fill="#fff">
        {letter}
      </text>
    </svg>
  );
}

function Taskbar() {
  return (
    <footer className="flex h-10 shrink-0 items-center bg-[#30251f] text-[12px] text-white">
      <button aria-label="Start" className="flex h-full w-12 items-center justify-center bg-[#1c1b1b]">
        <svg width="16" height="16" viewBox="0 0 16 16" fill="#fff" aria-hidden="true">
          <path d="M0 2.300L7 1.300V7.500H0zM8 1.100L16 0V7.500H8zM0 8.500H7V14.700L0 13.700zM8 8.500H16V16L8 14.900z" />
        </svg>
      </button>
      <label className="flex h-full w-[288px] items-center border border-[#c9c9c9] bg-[#f2f2f2] pl-[11px] text-[#2a2a2a]">
        <Svg w={17} h={17}>
          <circle cx="10.500" cy="6.500" r="5.500" strokeWidth="1.400" />
          <path d="M6.500 10.500L1 16" strokeWidth="1.400" />
        </Svg>
        <input
          placeholder="Type here to search"
          aria-label="Type here to search"
          className="ml-3 w-56 bg-transparent text-[14px] outline-none placeholder:text-[#3a3a3a]"
        />
      </label>
      <AppButton label="Task view">
        <Svg w={17} h={17} className="text-[#d5d5d5]">
          <path d="M1 0v3h10V0M1 17v-3h10v3M1 5h10v7H1zM14.500 0v17" />
          <path d="M13 6h3v3h-3z" fill="#d5d5d5" />
        </Svg>
      </AppButton>
      <AppButton label="Excel">
        <Tile letter="X" dark="#0f6b3a" mid="#1d9a5b" light="#33c481" />
      </AppButton>
      <AppButton label="Mail">
        <svg width="25" height="23" viewBox="0 0 25 23" aria-hidden="true">
          <path d="M0 8L12.500 0 25 8v14H0z" fill="#0f5a9c" />
          <path d="M1 7h23v8H1z" fill="#f4f8fb" />
          <path d="M0 8l12.500 8L25 8v14H0z" fill="#2aa4e8" />
          <path d="M0 22l12.500-9L25 22z" fill="#1583cf" />
        </svg>
      </AppButton>
      <AppButton label="Journal" open>
        <svg width="24" height="24" viewBox="0 0 24 24" aria-hidden="true">
          <path d="M0 0h24v24H0z" fill="#61b5dc" />
          <path d="M4 3h15v18H4z" fill="#fff" />
          <path d="M3 5h3M3 9h3M3 13h3M3 17h3" stroke="#3c86ad" strokeWidth="1.500" />
          <path d="M19 2l3 2-8 12-3 2 1-4z" fill="#2f8fc0" />
        </svg>
      </AppButton>
      <AppButton label="File Explorer" open>
        <svg width="22" height="20" viewBox="0 0 22 20" aria-hidden="true">
          <path d="M0 1h8l2 2h12v15H0z" fill="#e8a93a" />
          <path d="M0 5h22v13H0z" fill="#fbd66b" />
          <path d="M3 19v-8h16v8h-4v-4H7v4z" fill="#4a8fd6" />
        </svg>
      </AppButton>
      <AppButton label="Rabbit">
        <svg width="22" height="24" viewBox="0 0 22 24" aria-hidden="true">
          <path d="M0 2h10v7H0z" fill="#9a9a93" />
          <path d="M0 10h9v12H0z" fill="#111" />
          <path d="M3 16v4M6 16v4" stroke="#aaa" />
          <path d="M11 8L9 1l2.500.500L14 7l4-6 2 .500L18 8z" fill="#f4f4f4" />
          <circle cx="14.500" cy="9.500" r="4" fill="#f4f4f4" />
          <path d="M8 13l4-1h5l5-1v2l-4 2 .500 4 2.500 4-4 .500-2.500-3-3 3-3-.500 2-4 .500-4-3 .500z" fill="#f4f4f4" />
        </svg>
      </AppButton>
      <AppButton label="Edge" open>
        <svg width="24" height="24" viewBox="0 0 24 24" aria-hidden="true">
          <circle cx="12" cy="12" r="12" fill="#1673c4" />
          <path d="M0 12C1 3 8 0 13 0c7 0 11 5 11 10 0 4-3 6-6 6-4 0-4-2-3-4C14 5 5 5 0 12z" fill="#3fc7a0" />
          <path d="M0 11C3 2 14 0 20 4c-4-2-8-1-8 3C7 5 3 6 0 11z" fill="#29a9d8" />
          <path d="M9 9c-6 4-3 13 5 14 4-1 7-3 8-5-5 3-13 0-13-9z" fill="#0c4a94" />
          <path d="M15 11c-1 2-2 5 3 5-3 3-9 0-8-4 1-3 4-3 5-1z" fill="#30251f" />
        </svg>
      </AppButton>
      <AppButton label="Chrome">
        <svg width="24" height="24" viewBox="0 0 24 24" aria-hidden="true">
          <path d="M12 12L1.600 6A12 12 0 0 1 22.400 6z" fill="#e3402f" />
          <path d="M12 12L22.400 6A12 12 0 0 1 12 24z" fill="#fccb1d" />
          <path d="M12 12v12A12 12 0 0 1 1.600 6z" fill="#2fa24c" />
          <circle cx="12" cy="12" r="5.800" fill="#fff" />
          <circle cx="12" cy="12" r="4.500" fill="#3f7ee8" />
        </svg>
      </AppButton>
      <AppButton label="OneNote">
        <Tile letter="N" dark="#7719aa" mid="#ae4bd5" light="#ca64ea" />
      </AppButton>
      <AppButton label="Teams">
        <svg width="24" height="22" viewBox="0 0 24 22" aria-hidden="true">
          <circle cx="12" cy="4" r="3.500" fill="#7b83eb" />
          <circle cx="20" cy="5" r="2.500" fill="#5059c9" />
          <path d="M16 8h8v7c0 4-6 5-8 2z" fill="#5059c9" />
          <path d="M6 8h12v8c0 7-11 7-12 0z" fill="#7b83eb" />
          <rect y="5" width="12" height="12" rx="1" fill="#4b53bc" />
          <text x="6" y="14.500" textAnchor="middle" fontSize="9" fontWeight="700" fill="#fff">T</text>
        </svg>
      </AppButton>
      <AppButton label="Recorder" open active>
        <svg width="22" height="22" viewBox="0 0 22 22" fill="none" aria-hidden="true">
          <circle cx="11" cy="11" r="11" fill="#2f6ad0" />
          <path d="M4.500 10.500a6.500 6.500 0 0 0 13 0" stroke="#fff" strokeWidth="3.500" />
          <circle cx="11" cy="10" r="2" fill="#fff" />
          <path d="M4.500 7l1.500.5M8 3.500l.5 1.500M14 3.500L13.500 5M17.500 7l-1.500.5" stroke="#fff" strokeWidth="2" />
        </svg>
      </AppButton>
      <AppButton label="Settings" open>
        <svg width="20" height="20" viewBox="-10 -10 20 20" fill="none" stroke="#fff" aria-hidden="true">
          <circle r="5.500" strokeWidth="3" />
          <circle r="8" strokeWidth="3" strokeDasharray="3.140 3.140" />
        </svg>
      </AppButton>
      <AppButton label="Word" open>
        <Tile letter="W" dark="#185abd" mid="#2b7cd3" light="#41a5ee" />
      </AppButton>
      <div className="flex-1" />
      <div className="flex items-center">
        <div className="flex h-5 w-[49px] items-center justify-center border-2 border-white bg-[linear-gradient(90deg,#16a04a_58%,#000_58%)] text-[13px]">
          57%
        </div>
        <div className="h-3 w-[2px] bg-white" />
      </div>
      <button aria-label="Show hidden icons" className="ml-[29px]">
        <Svg w={14} h={8}>
          <path d="M1 7l6-6 6 6" />
        </Svg>
      </button>
      <button aria-label="Microphone" className="ml-[19px]">
        <Svg w={12} h={17}>
          <rect x="2" y="0" width="7" height="12" rx="1" fill="#fff" />
          <path d="M1 13h10M5.500 13v3M3 16h6" />
        </Svg>
      </button>
      <button aria-label="Pen workspace" className="ml-[24px]">
        <Svg w={16} h={16}>
          <path d="M4 10l7-8 2 2-7 8-3 1zM9 7c4-4 7-1 3 2M4 11c-5 0-2 5 1 3s5-3 7 0" />
        </Svg>
      </button>
      <div className="ml-[17px] w-[60px] text-center text-[11px] leading-[19px] whitespace-nowrap">
        <div>10:15 AM</div>
        <div>4/19/2023</div>
      </div>
      <button aria-label="Notifications" className="mr-[18px] ml-[17px]">
        <Svg w={19} h={18}>
          <path d="M9 13H6l-2-1H1V1h16v5M9 13v3M9 16c7 0 8-4 8-9-3 1-5 4-5 8" />
        </Svg>
      </button>
      <div className="mr-1 h-full w-px bg-[#6d655f]" />
    </footer>
  );
}

export default function App() {
  return (
    <div className="flex h-screen flex-col overflow-hidden font-['Noto_Sans',sans-serif] text-[#444]">
      <TitleBar />
      <div className="shrink-0 bg-[#f3f3f3]">
        <TabRow />
        <Ribbon />
      </div>
      <Workspace />
      <StatusBar />
      <Taskbar />
    </div>
  );
}
